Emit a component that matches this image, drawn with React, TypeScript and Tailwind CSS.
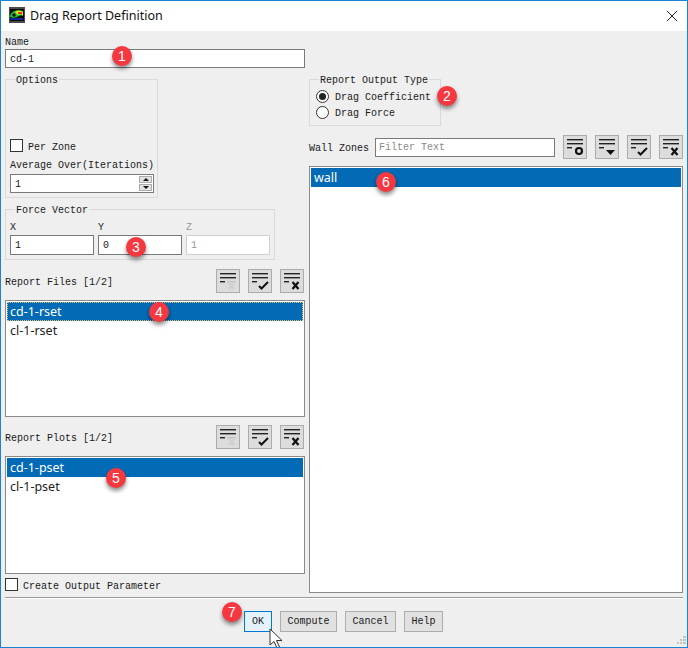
import React from "react";

const mono = "font-['Liberation_Mono',monospace] text-[10px] leading-[12px]";
const ink = "text-[#1a1a1a]";
const sans = "font-['Noto_Sans','Open_Sans',sans-serif] text-[12.5px]";

function T({ children, d = 2, cls = "text-[#1a1a1a]" }: { children: React.ReactNode; d?: 1 | 2; cls?: string }) {
  return <span className={`relative whitespace-nowrap ${mono} ${cls} ${d === 2 ? "top-[2px]" : "top-[1px]"}`}>{children}</span>;
}

function Badge({ n, cls }: { n: number; cls: string }) {
  return (
    <div className={`absolute w-[20px] h-[20px] rounded-full bg-[#f5383f] text-white flex items-center justify-center font-['Liberation_Sans',sans-serif] text-[14px] shadow-[0_3px_4px_rgba(0,0,0,0.45)] ${cls}`}>
      {n}
    </div>
  );
}

type Kind = "all" | "check" | "x" | "new" | "drop";
function ToolBtn({ kind }: { kind: Kind }) {
  const c = "#111";
  return (
    <button className="w-[24px] h-[24px] bg-[#dcdcdc] border border-[#ababab] flex items-center justify-center shrink-0">
      <svg width="22" height="22" viewBox="0 0 22 22">
        <rect x="3" y="3" width="16" height="1.4" fill="#222" />
        <rect x="3" y="7" width="16" height="1.4" fill="#222" />
        <rect x="3" y="11" width="5" height="1.4" fill="#222" />
        {kind === "all" && <rect x="10" y="11" width="9" height="1.4" fill="#c4c4c4" />}
        {kind === "all" && <path d="M12 13l5 6M17 13l-5 6" stroke="#d0d0d0" strokeWidth="2" fill="none" />}
        {kind === "check" && <path d="M10 16l2.5 2.5L19 12" stroke={c} strokeWidth="2" fill="none" />}
        {kind === "x" && <path d="M11.5 12l6 7M17.5 12l-6 7" stroke={c} strokeWidth="2.2" fill="none" />}
        {kind === "new" && <circle cx="15" cy="15" r="3" stroke={c} strokeWidth="2.2" fill="none" />}
        {kind === "drop" && <path d="M10 14h9l-4.5 5z" fill={c} />}
      </svg>
    </button>
  );
}

function Field({ value, cls, disabled }: { value: string; cls: string; disabled?: boolean }) {
  return (
    <div className={`bg-white border flex items-center pl-[4px] ${disabled ? "border-[#d0d0d0]" : "border-[#7a7a7a]"} ${cls}`}>
      <T d={1} cls={disabled ? "text-[#999]" : "text-[#1a1a1a]"}>{value}</T>
    </div>
  );
}

function Group({ title, cls, children }: { title: string; cls: string; children: React.ReactNode }) {
  return (
    <div className={`relative border border-[#dadada] ${cls}`}>
      <span className={`absolute top-[-5px] left-[9px] bg-[#efefef] px-[1px] ${mono} ${ink}`}>{title}</span>
      {children}
    </div>
  );
}

function Check() {
  return <div className="w-[13px] h-[13px] bg-white border border-[#333] shrink-0" />;
}

function Radio({ on }: { on?: boolean }) {
  return (
    <div className="w-[13px] h-[13px] rounded-full bg-white border border-[#333] flex items-center justify-center shrink-0">
      {on && <div className="w-[7px] h-[7px] rounded-full bg-[#222]" />}
    </div>
  );
}

function Row({ text, selected, focus }: { text: string; selected?: boolean; focus?: boolean }) {
  return (
    <div className={`h-[19px] flex items-center leading-[19px] ${sans} ${selected ? "bg-[#036ab5] text-white" : "bg-white text-[#222]"} ${focus ? "pl-[2px] border border-dotted border-[#e8c070]" : "pl-[3px]"}`}>
      {text}
    </div>
  );
}

function ListHead({ label }: { label: string }) {
  return (
    <div className="h-[24px] flex items-center">
      <div className="flex-1 flex"><T>{label}</T></div>
      <div className="flex gap-[8px] mr-[1px]">
        <ToolBtn kind="all" />
        <ToolBtn kind="check" />
        <ToolBtn kind="x" />
      </div>
    </div>
  );
}

function FootBtn({ label, w, active }: { label: string; w: string; active?: boolean }) {
  return (
    <button className={`h-[21px] border flex items-center justify-center ${mono} ${ink} ${w} ${active ? "bg-[#e5f1fb] border-[#0078d7]" : "bg-[#e1e1e1] border-[#adadad]"}`}>
      {label}
    </button>
  );
}

export default function App() {
  return (
    <div className="relative w-[688px] h-[648px] bg-[#efefef] border border-[#1883d7] overflow-hidden flex flex-col">
      {/* title bar */}
      <div className="h-[30px] bg-white flex items-center pl-[8px] pr-[8px] shrink-0">
        <svg width="16" height="16" viewBox="0 0 16 16" className="shrink-0 mb-[2px]">
          <rect width="16" height="16" fill="#4a4a4a" />
          <rect x="1" y="2" width="14" height="12" fill="#0a0a0a" />
          <path d="M1 9c1-5 8-7 13-5v5c-3-2-4 0-6 1-2 1-5 1-7 0z" fill="#16c93a" />
          <path d="M6 5c3-2 6-1 8 0v3c-2-1-3-1-5 0-1-1-2-2-3-3z" fill="#f2e612" />
          <rect x="9" y="5" width="4" height="2" fill="#e8331b" />
          <circle cx="5" cy="8" r="1.7" fill="#0a0a0a" />
          <rect x="1" y="11" width="13" height="2" fill="#0a2a9a" />
        </svg>
        <span className="ml-[5px] font-['Noto_Sans','Open_Sans',sans-serif] text-[12.5px] text-[#111] flex-1">Drag Report Definition</span>
        <svg width="12" height="12" viewBox="0 0 12 12" className="mr-[1px]">
          <path d="M1 1l10 10M11 1L1 11" stroke="#222" strokeWidth="1" fill="none" />
        </svg>
      </div>

      {/* main */}
      <div className="h-[565px] flex gap-[4px] px-[4px] shrink-0">
        {/* left */}
        <div className="w-[300px] flex flex-col">
          <div className="mt-[5px] h-[13px] flex shrink-0"><T d={1}>Name</T></div>
          <Field value="cd-1" cls="h-[19px] shrink-0" />
          <Group title="Options" cls="w-[153px] h-[119px] mt-[11px] pl-[4px] flex flex-col shrink-0">
            <div className="mt-[59px] flex items-center gap-[5px]">
              <Check />
              <T>Per Zone</T>
            </div>
            <div className="mt-[6px] flex"><T>Average Over(Iterations)</T></div>
            <div className="relative mt-[4px] w-[144px] h-[19px] bg-white border border-[#7a7a7a] flex items-center pl-[4px]">
              <T d={1}>1</T>
              <div className="absolute right-[1px] top-[1px] w-[13px] h-[15px] flex flex-col gap-[1px]">
                <div className="h-[7px] bg-[#e1e1e1] border border-[#adadad] flex items-center justify-center">
                  <div className="w-0 h-0 border-x-[3px] border-x-transparent border-b-[3px] border-b-[#111]" />
                </div>
                <div className="h-[7px] bg-[#e1e1e1] border border-[#adadad] flex items-center justify-center">
                  <div className="w-0 h-0 border-x-[3px] border-x-transparent border-t-[3px] border-t-[#111]" />
                </div>
              </div>
            </div>
          </Group>
          <Group title="Force Vector" cls="w-[270px] h-[51px] mt-[11px] px-[4px] shrink-0">
            <div className="flex gap-[4px] mt-[10px]">
              <div className="flex flex-col gap-[1px]">
                <div className="h-[14px] flex"><T>X</T></div>
                <Field value="1" cls="w-[84px] h-[20px]" />
              </div>
              <div className="flex flex-col gap-[1px]">
                <div className="h-[14px] flex"><T>Y</T></div>
                <Field value="0" cls="w-[84px] h-[20px]" />
              </div>
              <div className="flex flex-col gap-[1px]">
                <div className="h-[14px] flex"><T cls="text-[#999]">Z</T></div>
                <Field value="1" cls="w-[84px] h-[20px]" disabled />
              </div>
            </div>
          </Group>
          <div className="mt-[9px]">
            <ListHead label="Report Files [1/2]" />
          </div>
          <div className="mt-[7px] h-[117px] shrink-0 bg-white border border-[#8a8a8a] p-[1px]">
            <Row text="cd-1-rset" selected focus />
            <Row text="cl-1-rset" />
          </div>
          <div className="mt-[8px]">
            <ListHead label="Report Plots [1/2]" />
          </div>
          <div className="mt-[7px] h-[118px] shrink-0 bg-white border border-[#8a8a8a] p-[1px]">
            <Row text="cd-1-pset" selected />
            <Row text="cl-1-pset" />
          </div>
          <div className="mt-[4px] flex items-center gap-[5px]">
            <Check />
            <T>Create Output Parameter</T>
          </div>
        </div>

        {/* right */}
        <div className="w-[374px] flex flex-col">
          <Group title="Report Output Type" cls="w-[132px] h-[47px] mt-[48px] pl-[6px] shrink-0">
            <div className="mt-[10px] flex items-center gap-[6px]">
              <Radio on />
              <T d={1}>Drag Coefficient</T>
            </div>
            <div className="mt-[3px] flex items-center gap-[6px]">
              <Radio />
              <T d={1}>Drag Force</T>
            </div>
          </Group>
          <div className="mt-[9px] h-[24px] flex items-center">
            <div className="w-[66px] flex"><T>Wall Zones</T></div>
            <div className="w-[180px] h-[19px] bg-white border border-[#7a7a7a] flex items-center pl-[3px]">
              <T d={1} cls="text-[#8a8a8a]">Filter Text</T>
            </div>
            <div className="flex gap-[8px] ml-[8px]">
              <ToolBtn kind="new" />
              <ToolBtn kind="drop" />
              <ToolBtn kind="check" />
              <ToolBtn kind="x" />
            </div>
          </div>
          <div className="mt-[7px] h-[427px] shrink-0 bg-white border border-[#8a8a8a] p-[1px]">
            <Row text="wall" selected />
          </div>
        </div>
      </div>

      {/* footer */}
      <div className="mx-[4px] mt-[1px] h-[2px] border-t border-[#9a9a9a] bg-white shrink-0" />
      <div className="flex justify-center gap-[8px] mt-[12px] pr-[1px] shrink-0">
        <FootBtn label="OK" w="w-[28px]" active />
        <FootBtn label="Compute" w="w-[57px]" />
        <FootBtn label="Cancel" w="w-[51px]" />
        <FootBtn label="Help" w="w-[39px]" />
      </div>

      {/* resize grip */}
      <svg width="10" height="10" viewBox="0 0 10 10" className="absolute right-[1px] bottom-[1px]">
        <path d="M7 0h3v2H7zM4 3h2v2H4zM7 3h3v2H7zM1 6h2v2H1zM4 6h2v2H4zM7 6h3v2H7z" fill="#c2c2c2" />
      </svg>

      {/* pointer */}
      <svg width="16" height="22" viewBox="0 0 16 22" className="absolute left-[268px] top-[627px]">
        <path d="M1 1v16l4-3.5 3 6.5 2.5-1-3-6.5H13z" fill="#fff" stroke="#333" strokeWidth="1" />
      </svg>

      <Badge n={1} cls="left-[111px] top-[45px]" />
      <Badge n={2} cls="left-[436px] top-[85px]" />
      <Badge n={3} cls="left-[125px] top-[236px]" />
      <Badge n={4} cls="left-[148px] top-[301px]" />
      <Badge n={5} cls="left-[105px] top-[467px]" />
      <Badge n={6} cls="left-[375px] top-[171px]" />
      <Badge n={7} cls="left-[221px] top-[601px]" />
    </div>
  );
}
